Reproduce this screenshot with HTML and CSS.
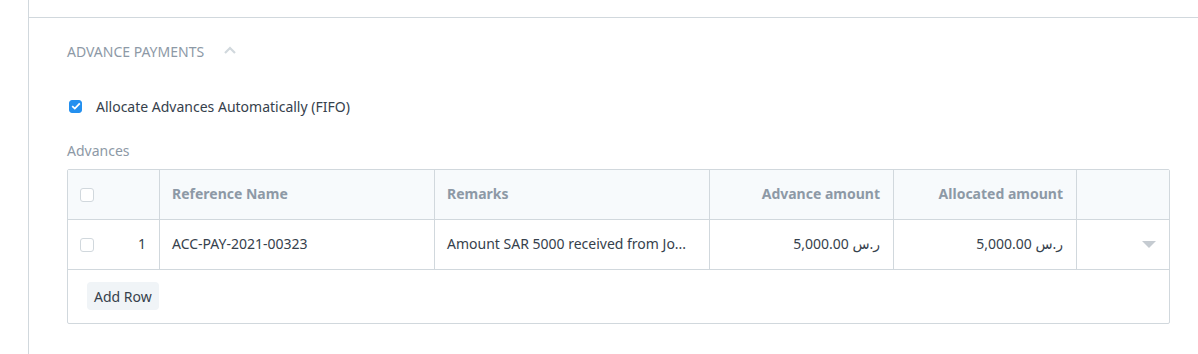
FILE: index.html
```html
<!DOCTYPE html>
<html>
<head>
<meta charset="utf-8">
<link rel="stylesheet" href="styles.css">
</head>
<body>
<div class="page">
  <div class="top-spacer"></div>
  <div class="section">
    <div class="section-head">
      <span class="section-title">ADVANCE PAYMENTS</span>
      <svg class="chevron" width="12" height="8" viewBox="0 0 12 8"><path d="M1 7 L6 2 L11 7" fill="none" stroke="#d1d8dd" stroke-width="2.2"/></svg>
    </div>
    <label class="check-row">
      <span class="cb checked"><svg width="10" height="8" viewBox="0 0 10 8"><path d="M1.2 4.2 L3.8 6.6 L8.8 1.4" fill="none" stroke="#fff" stroke-width="1.8"/></svg></span>
      <span class="check-label">Allocate Advances Automatically (FIFO)</span>
    </label>
    <div class="field-label">Advances</div>
    <div class="grid">
      <div class="row head">
        <div class="cell c-idx"><span class="cb"></span></div>
        <div class="cell c-ref">Reference Name</div>
        <div class="cell c-rem">Remarks</div>
        <div class="cell c-adv num">Advance amount</div>
        <div class="cell c-alloc num">Allocated amount</div>
        <div class="cell c-act"></div>
      </div>
      <div class="row data">
        <div class="cell c-idx"><span class="cb"></span><span class="idx">1</span></div>
        <div class="cell c-ref">ACC-PAY-2021-00323</div>
        <div class="cell c-rem">Amount SAR 5000 received from Jo...</div>
        <div class="cell c-adv num">5,000.00&nbsp;<span class="cur">ر.س</span></div>
        <div class="cell c-alloc num">5,000.00&nbsp;<span class="cur">ر.س</span></div>
        <div class="cell c-act"><svg width="14" height="7" viewBox="0 0 14 7"><path d="M0 0 L14 0 L7 7 Z" fill="#c5cbd1"/></svg></div>
      </div>
      <div class="footer">
        <button class="btn">Add Row</button>
      </div>
    </div>
  </div>
</div>
</body>
</html>
```
FILE: styles.css
```css
* { box-sizing: border-box; }
html, body { margin: 0; padding: 0; background: #fff; }
body {
  font-family: "Noto Sans", "Open Sans", "DejaVu Sans", sans-serif;
  font-size: 14px;
  color: #36414c;
  width: 1198px;
  height: 354px;
  overflow: hidden;
}
.page {
  margin-left: 28px;
  border-left: 1px solid #d1d8dd;
  height: 354px;
}
.top-spacer {
  height: 18px;
  border-bottom: 1px solid #d1d8dd;
}
.section {
  padding: 23px 28px 0 38px;
}
.section-head {
  display: flex;
  align-items: center;
  height: 20px;
  gap: 20px;
}
.section-title {
  font-size: 14px;
  color: #8d99a6;
}
.chevron { margin-top: -2px; }
.check-row {
  display: flex;
  align-items: center;
  margin-top: 35px;
  height: 20px;
  padding-left: 2px;
}
.cb {
  display: inline-flex;
  align-items: center;
  justify-content: center;
  width: 14px;
  height: 14px;
  border: 1px solid #d1d8dd;
  border-radius: 3px;
  background: #fff;
}
.cb.checked {
  width: 13px;
  height: 13px;
  background: #2490ef;
  border-color: #2490ef;
}
.check-label {
  margin-left: 14px;
  font-size: 14px;
  color: #36414c;
}
.field-label {
  margin-top: 25px;
  height: 20px;
  font-size: 14px;
  color: #8d99a6;
}
.grid {
  margin-top: 8px;
  border: 1px solid #d1d8dd;
  border-radius: 2px;
}
.row {
  display: flex;
  height: 50px;
  border-bottom: 1px solid #d1d8dd;
}
.row.head {
  background: #f7fafc;
  font-weight: 700;
  color: #8d99a6;
}
.cell {
  display: flex;
  align-items: center;
  padding: 0 13px 2px 12px;
  border-right: 1px solid #d1d8dd;
  white-space: nowrap;
  overflow: hidden;
}
.cell.num { justify-content: flex-end; }
.c-idx { width: 92px; padding-left: 12px; padding-bottom: 0; }
.c-idx .idx { margin-left: auto; margin-bottom: 2px; }
.c-ref { width: 275px; }
.c-rem { width: 275px; }
.c-adv { width: 184px; }
.c-alloc { width: 183px; }
.c-act { flex: 1; border-right: none; justify-content: flex-end; padding: 0 13px 0 0; }
.cur { font-size: 14px; }
.row.data { color: #36414c; }
.footer {
  height: 53px;
  padding: 12px 19px;
}
.btn {
  font-family: inherit;
  font-size: 14px;
  color: #36414c;
  background: #f0f4f7;
  border: none;
  border-radius: 4px;
  height: 28px;
  padding: 0 7px;
}
```
